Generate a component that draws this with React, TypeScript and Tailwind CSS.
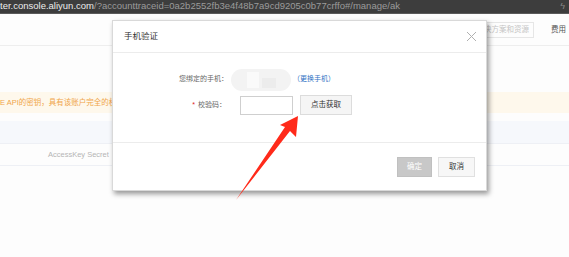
export default function App() {
  return (
    <div
      className="relative w-[569px] h-[257px] overflow-hidden bg-[#fdfdfd]"
      style={{ fontFamily: '"Liberation Sans", "Noto Sans CJK SC", sans-serif' }}
    >
      {/* Address bar */}
      <div className="h-[14px] bg-[#3d3d3d] border-b border-[#5a5a5a] flex items-center justify-between pr-[4px]">
        <div className="text-[9.5px] leading-none whitespace-nowrap -mt-[1px]">
          <span className="text-[#ececec]">ter.console.aliyun.com</span>
          <span className="text-[#9b9b9b]">/?accounttraceid=0a2b2552fb3e4f48b7a9cd9205c0b77crffo#/manage/ak</span>
        </div>
        <span className="text-[9px] text-[#8a8a8a] leading-none">ϟ</span>
      </div>

      {/* Page behind */}
      <div className="h-[32px] border-b border-[#eeeeee] flex items-center justify-end pr-[3px] gap-[17px]">
        <div className="h-[16px] px-[4px] border border-[#e6e6e6] flex items-center text-[7.5px] text-[#c4c4c4] whitespace-nowrap">
          解决方案和资源
        </div>
        <span className="text-[7.5px] text-[#555]">费用</span>
      </div>
      <div className="h-[46px]" />
      <div className="h-[21px] bg-[#fef8ec] flex items-center text-[7.5px] text-[#f0a54a] whitespace-nowrap">
        E API的密钥，具有该账户完全的权
      </div>
      <div className="h-[8px]" />
      <div className="h-[23px] bg-[#f6f8fc] border-b border-[#eef0f5]" />
      <div className="h-[22px] border-b border-[#eef0f5] flex items-center pl-[48px] text-[7.5px] text-[#b5b5b5]">
        AccessKey Secret
      </div>

      {/* Dialog */}
      <div className="absolute left-[112px] top-[20px] w-[375px] h-[171px] bg-white border border-[#d9d9d9] shadow-[2px_3px_5px_rgba(0,0,0,0.4)] flex flex-col">
        <div className="h-[32px] shrink-0 border-b border-[#ececec] flex items-center justify-between pl-[11px] pr-[9px]">
          <span className="text-[8.5px] text-[#333]">手机验证</span>
          <svg width="11" height="11" viewBox="0 0 11 11">
            <path d="M1 1 L10 10 M10 1 L1 10" stroke="#b0b0b0" strokeWidth="1" />
          </svg>
        </div>
        <div className="flex-1 flex flex-col gap-[6px] pt-[17px] text-[7px]">
          <div className="h-[19px] flex items-center">
            <div className="w-[115px] text-right text-[#666]">您绑定的手机：</div>
            <div className="ml-[3px] w-[60px] h-[22px] rounded-full bg-[#f3f3f3] flex items-center justify-center gap-[3px]">
              <div className="w-[12px] h-[16px] bg-[#fafafa]" />
              <div className="w-[14px] h-[10px] mt-[6px] bg-[#ececec]" />
            </div>
            <span className="ml-[2px] text-[#2f72c4]">（更换手机）</span>
          </div>
          <div className="h-[20px] flex items-center">
            <div className="w-[115px] text-right text-[#666] flex justify-end items-center">
              <span className="text-[#e02020] mr-[3px]">*</span>
              <span className="w-[30px] text-left">校验码：</span>
            </div>
            <div className="ml-[12px] w-[53px] h-[19px] border border-[#cfcfcf] bg-white" />
            <div className="ml-[7px] w-[52px] h-[20px] border border-[#dcdcdc] bg-[#f5f5f5] flex items-center justify-center text-[7.5px] text-[#333]">
              点击获取
            </div>
          </div>
        </div>
        <div className="h-[48px] shrink-0 border-t border-[#ececec] flex items-center justify-end pr-[11px] gap-[6px] text-[7.5px]">
          <div className="w-[35px] h-[20px] bg-[#c8c8c8] border border-[#c0c0c0] text-white flex items-center justify-center">
            确定
          </div>
          <div className="w-[37px] h-[20px] bg-[#f7f7f7] border border-[#e0e0e0] text-[#333] flex items-center justify-center">
            取消
          </div>
        </div>
      </div>

      {/* Red arrow */}
      <svg className="absolute left-0 top-0 pointer-events-none" width="569" height="257" viewBox="0 0 569 257">
        <polygon
          points="298,116 296,137 290,131 236,200 285,127 280,125"
          fill="#ff2a1a"
        />
      </svg>
    </div>
  );
}
